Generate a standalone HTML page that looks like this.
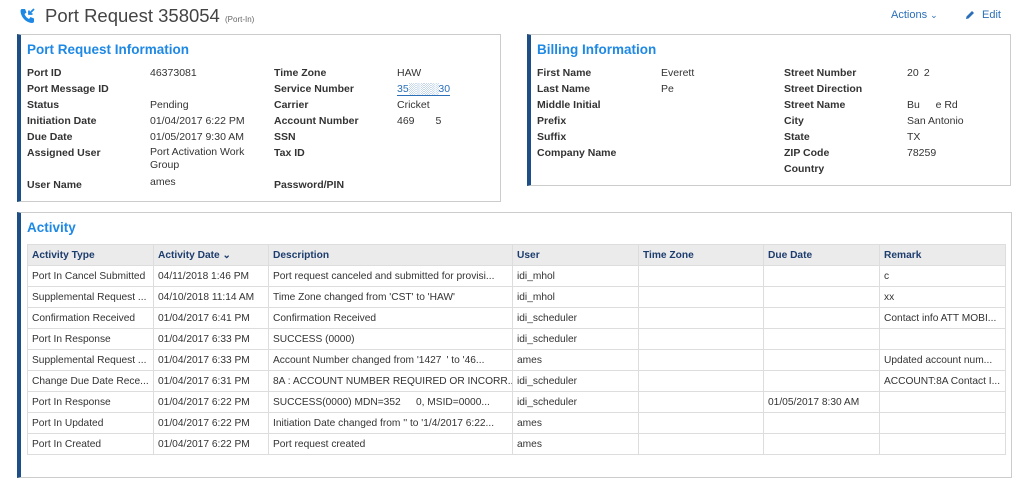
<!DOCTYPE html>
<html><head><meta charset="utf-8"><style>
*{margin:0;padding:0;box-sizing:border-box}
body{width:1024px;height:489px;background:#fff;font-family:"Liberation Sans",sans-serif;font-size:10.5px;color:#333;position:relative;overflow:hidden}
.a{position:absolute;white-space:nowrap}
.panel{position:absolute;border:1px solid #ccc;border-left:4px solid #1d4f86;background:#fff}
.h{position:absolute;color:#1e88e5;font-weight:bold;font-size:13.5px}
.l{font-weight:bold;color:#333}
table{position:absolute;left:27px;top:244px;border-collapse:collapse;width:978px;table-layout:fixed}
td,th{border:1px solid #ddd;height:21px;padding:0 4px;text-align:left;font-size:10.2px;white-space:nowrap;overflow:hidden}
th{background:#ebebeb;color:#1d3d6e;font-weight:bold}
</style></head><body>
<svg class="a" style="left:19px;top:7px" width="17" height="17" viewBox="0 0 17 17"><path d="M3 2 L6 2 L7.5 5.5 L5.5 7 C6.5 9.5 8 11 10 12 L11.5 10 L15 11.5 L15 14.5 C15 15.5 14 16 13 16 C7 15.5 2 10.5 1.5 4 C1.5 3 2 2 3 2Z" fill="#1e88e5"/><path d="M15 2 L10 7 M10 3.5 V7 H13.5" stroke="#1e88e5" stroke-width="1.8" fill="none"/></svg>
<div class="a" style="left:45px;top:5px;font-size:18.5px;color:#444">Port Request 358054 <span style="font-size:8px;color:#666">(Port-In)</span></div>
<div class="a" style="left:891px;top:9px;color:#2a6fb8;font-size:11px">Actions <span style="font-size:9px">&#8964;</span></div>
<svg class="a" style="left:965px;top:10px" width="10" height="10" viewBox="0 0 10 10"><path d="M1 9 L1.5 6.5 L7 1 L9 3 L3.5 8.5Z" fill="#2a6fb8"/></svg>
<div class="a" style="left:982px;top:9px;color:#2a6fb8;font-size:11px">Edit</div>

<div class="panel" style="left:17px;top:34px;width:484px;height:168px"></div>
<div class="h a" style="left:27px;top:42px">Port Request Information</div>
<div class="a l" style="left:27px;top:65px;line-height:16px">Port ID<br>Port Message ID<br>Status<br>Initiation Date<br>Due Date<br>Assigned User<br><br>User Name</div>
<div class="a" style="left:150px;top:65px;line-height:16px">46373081<br>&nbsp;<br>Pending<br>01/04/2017 6:22 PM<br>01/05/2017 9:30 AM</div>
<div class="a" style="left:150px;top:146px;line-height:13px">Port Activation Work<br>Group</div>
<div class="a" style="left:150px;top:176px">ames</div>
<div class="a l" style="left:274px;top:65px;line-height:16px">Time Zone<br>Service Number<br>Carrier<br>Account Number<br>SSN<br>Tax ID<br><br>Password/PIN</div>
<div class="a" style="left:397px;top:65px;line-height:16px">HAW<br><span style="color:#2a6fb8;border-bottom:1px solid #2a6fb8">35&#9617;&#9617;&#9617;&#9617;30</span><br>Cricket<br>469&#8195;&#8195;5</div>

<div class="panel" style="left:527px;top:34px;width:484px;height:152px"></div>
<div class="h a" style="left:537px;top:42px">Billing Information</div>
<div class="a l" style="left:537px;top:65px;line-height:16px">First Name<br>Last Name<br>Middle Initial<br>Prefix<br>Suffix<br>Company Name</div>
<div class="a" style="left:661px;top:65px;line-height:16px">Everett<br>Pe</div>
<div class="a l" style="left:784px;top:65px;line-height:16px">Street Number<br>Street Direction<br>Street Name<br>City<br>State<br>ZIP Code<br>Country</div>
<div class="a" style="left:907px;top:65px;line-height:16px">20&#8194;2<br>&nbsp;<br>Bu&#8195;&#8194;e Rd<br>San Antonio<br>TX<br>78259</div>

<div class="panel" style="left:17px;top:212px;width:995px;height:266px"></div>
<div class="h a" style="left:27px;top:220px">Activity</div>
<table>
<colgroup><col style="width:126px"><col style="width:115px"><col style="width:244px"><col style="width:126px"><col style="width:125px"><col style="width:116px"><col style="width:126px"></colgroup>
<tr><th>Activity Type</th><th>Activity Date &#8964;</th><th>Description</th><th>User</th><th>Time Zone</th><th>Due Date</th><th>Remark</th></tr>
<tr><td>Port In Cancel Submitted</td><td>04/11/2018 1:46 PM</td><td>Port request canceled and submitted for provisi...</td><td>idi_mhol</td><td></td><td></td><td>c</td></tr>
<tr><td>Supplemental Request ...</td><td>04/10/2018 11:14 AM</td><td>Time Zone changed from 'CST' to 'HAW'</td><td>idi_mhol</td><td></td><td></td><td>xx</td></tr>
<tr><td>Confirmation Received</td><td>01/04/2017 6:41 PM</td><td>Confirmation Received</td><td>idi_scheduler</td><td></td><td></td><td>Contact info ATT MOBI...</td></tr>
<tr><td>Port In Response</td><td>01/04/2017 6:33 PM</td><td>SUCCESS (0000)</td><td>idi_scheduler</td><td></td><td></td><td></td></tr>
<tr><td>Supplemental Request ...</td><td>01/04/2017 6:33 PM</td><td>Account Number changed from '1427&#8194;' to '46...</td><td>ames</td><td></td><td></td><td>Updated account num...</td></tr>
<tr><td>Change Due Date Rece...</td><td>01/04/2017 6:31 PM</td><td>8A : ACCOUNT NUMBER REQUIRED OR INCORR...</td><td>idi_scheduler</td><td></td><td></td><td>ACCOUNT:8A Contact I...</td></tr>
<tr><td>Port In Response</td><td>01/04/2017 6:22 PM</td><td>SUCCESS(0000) MDN=352&#8195;&#8194;0, MSID=0000...</td><td>idi_scheduler</td><td></td><td>01/05/2017 8:30 AM</td><td></td></tr>
<tr><td>Port In Updated</td><td>01/04/2017 6:22 PM</td><td>Initiation Date changed from '' to '1/4/2017 6:22...</td><td>ames</td><td></td><td></td><td></td></tr>
<tr><td>Port In Created</td><td>01/04/2017 6:22 PM</td><td>Port request created</td><td>ames</td><td></td><td></td><td></td></tr>
</table>
</body></html>
